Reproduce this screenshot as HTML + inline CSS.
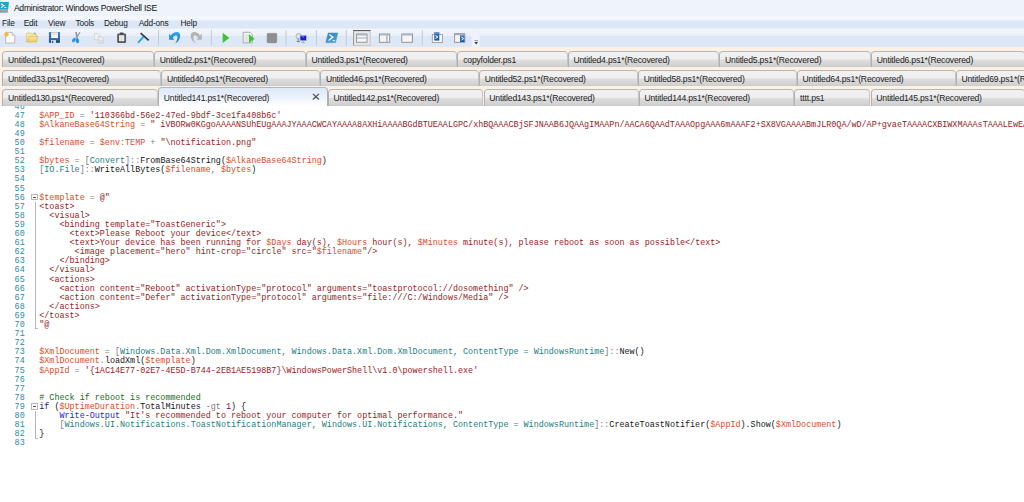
<!DOCTYPE html>
<html><head><meta charset="utf-8"><title>Administrator: Windows PowerShell ISE</title>
<style>
html,body{margin:0;padding:0;}
body{width:1024px;height:502px;overflow:hidden;position:relative;background:#fff;font-family:"Liberation Sans",sans-serif;}
#top{position:absolute;left:0;top:0;width:1024px;height:48px;
 background:linear-gradient(to bottom,#eff3fb 0,#eff3fb 16px,#f6f9fd 17px,#eff4fb 20px,#dde7f6 21px,#dce6f5 28px,#f3f6fc 29px,#eaf0f9 35.5px,#dde7f6 36.5px,#dde7f6 47px,#fdf1e3 47.6px);}
#strip{position:absolute;left:0;top:47.5px;width:1024px;height:58px;background:#fdf1e3;}
#title{position:absolute;left:13.9px;top:0;height:17px;line-height:16.5px;font-size:8.6px;letter-spacing:-0.25px;color:#111;white-space:nowrap;}
.mi{position:absolute;top:17px;height:12px;line-height:12.5px;font-size:8.3px;letter-spacing:-0.15px;color:#1a1a1a;white-space:nowrap;}
.tab{position:absolute;box-sizing:border-box;border:1px solid #b0b0b0;border-top-color:#b6b6b6;border-right-color:#c4c4c4;border-bottom:none;border-radius:4px 4px 0 0;
 background:linear-gradient(to bottom,#f1f1f1 0,#efefef 46%,#dddddd 54%,#d1d1d1 92%,#c8c8c8 100%);font-size:8.6px;letter-spacing:-0.18px;color:#1b1b1b;white-space:nowrap;overflow:hidden;}
.tab span{position:absolute;left:4.8px;top:1px;line-height:15.6px;}
.tab.sel{background:linear-gradient(to bottom,#dde8f8 0,#e8effa 40%,#ffffff 100%);margin-top:-1.7px;border-right-color:#b0b0b0;height:19px !important;z-index:3;}
.tab.sel span{top:2.4px}
#tabline{position:absolute;left:0;top:104.6px;width:1024px;height:1px;background:#8c8c8c;}
#editor{position:absolute;left:0;top:105.6px;width:1024px;height:397px;background:#fff;overflow:hidden;}
.ln{position:absolute;left:0;height:0;white-space:pre;font-family:"Liberation Mono",monospace;font-size:8.425px;line-height:0;letter-spacing:0;}
.ln span{position:relative;}
.fbox{position:absolute;left:31.4px;width:6.3px;height:6.3px;box-sizing:border-box;border:0.9px solid #b9b9b9;background:#fff;}
.fbox i{position:absolute;left:0.8px;top:1.8px;width:3px;height:0.9px;background:#505050;}
.fline{position:absolute;left:35.1px;width:0.9px;background:#b6b6b6;}
.ftick{position:absolute;left:35.1px;width:2.6px;height:0.8px;background:#b6b6b6;}
.num{display:inline-block;width:24.70px;margin-left:14.6px;color:#2b8aa6;}
.v{color:#dc4a1e} .s{color:#962222} .o{color:#7c7c7c} .t{color:#1b8080} .m{color:#151515}
.c{color:#1a6a1a} .k{color:#1a1a8b} .n{color:#800080} .b{color:#2020ff}
</style></head><body>
<div id="top"></div>
<div id="strip"></div>
<div id="title">Administrator: Windows PowerShell ISE</div>
<span class="mi" style="left:2.0px">File</span><span class="mi" style="left:23.7px">Edit</span><span class="mi" style="left:48.0px">View</span><span class="mi" style="left:75.5px">Tools</span><span class="mi" style="left:104.0px">Debug</span><span class="mi" style="left:138.7px">Add-ons</span><span class="mi" style="left:180.4px">Help</span>
<svg id="icons" width="1024" height="48" viewBox="0 0 1024 48" style="position:absolute;left:0;top:0">
<defs>
<linearGradient id="gsave" x1="0" y1="0" x2="0" y2="1"><stop offset="0" stop-color="#3d7cc8"/><stop offset="1" stop-color="#27589c"/></linearGradient>
<linearGradient id="gps" x1="0" y1="0" x2="1" y2="1"><stop offset="0" stop-color="#2a7fb8"/><stop offset="1" stop-color="#55a8d6"/></linearGradient>
<linearGradient id="gfold" x1="0" y1="0" x2="0" y2="1"><stop offset="0" stop-color="#f7e7a4"/><stop offset="1" stop-color="#eccb62"/></linearGradient>
<linearGradient id="gbl" x1="0" y1="0" x2="0" y2="1"><stop offset="0" stop-color="#2f7fd0"/><stop offset="1" stop-color="#1d55a8"/></linearGradient>
<linearGradient id="gundo" gradientUnits="userSpaceOnUse" x1="0" y1="32" x2="0" y2="44"><stop offset="0" stop-color="#2ea6ee"/><stop offset="1" stop-color="#1a74c4"/></linearGradient>
</defs>
<!-- app icon -->
<g>
<path d="M0 2 L9 2 L8.1 9.5 L0 9.5 Z" fill="#18a8ca"/>
<path d="M0 9.4 L8.1 9.4 L7.5 12.7 L0 12.7 Z" fill="#7e9a9c"/>
<path d="M1 3.700 L3.800 5.600 L1 7.600" fill="none" stroke="#fff" stroke-width="1.1"/>
<path d="M4.300 7.500 L6.300 7.500" stroke="#fff" stroke-width="0.9"/>
<path d="M0.5 11 H6.800" stroke="#a9bcbc" stroke-width="0.9"/>
</g>
<!-- new -->
<g>
<path d="M5.6 32.4 L12 32.4 L14.8 35.2 L14.8 43 L5.6 43 Z" fill="#fbfbfb" stroke="#b4b4b8" stroke-width="0.9"/>
<path d="M12 32.4 L12 35.2 L14.8 35.2" fill="#e6e6e6" stroke="#b4b4b8" stroke-width="0.7"/>
<path d="M6.4 31.6 L9 34.4 L6.4 37.2 L3.8 34.4 Z" fill="#f9b82e"/>
</g>
<!-- open -->
<g>
<path d="M26.4 34 L27.2 33 L31 33 L31.8 34 L36.4 34 L36.4 41.6 L26.4 41.6 Z" fill="#f6e9ad" stroke="#d9bc5c" stroke-width="0.6"/>
<path d="M33.5 33.2 L35.4 33.2 L35.4 34.4" fill="none" stroke="#56a89a" stroke-width="0.8"/>
<path d="M28.8 36.4 L38 36.4 L36.2 42 L26.8 42 Z" fill="url(#gfold)" stroke="#d4b24e" stroke-width="0.6"/>
</g>
<!-- save -->
<g>
<rect x="48.9" y="32" width="11.1" height="11.1" rx="0.8" fill="url(#gsave)"/>
<rect x="51.1" y="32.3" width="6.9" height="5.8" fill="#f6f6f6"/>
<rect x="51.1" y="32.3" width="6.9" height="0.9" fill="#c9c9c9"/>
<rect x="52.3" y="34.4" width="4.5" height="0.6" fill="#d0d0d0"/>
<rect x="51.1" y="40.1" width="4.8" height="3" fill="#e2e6ee"/>
<rect x="52.1" y="40.9" width="1.1" height="2.2" fill="#1f3f78"/>
<rect x="56.6" y="40.4" width="2" height="2" fill="#1f4a8c"/>
</g>
<!-- cut -->
<g>
<path d="M75.3 32.1 L76.8 32.1 L77.7 38 L76.3 38.5 Z" fill="#8a9199"/>
<path d="M80.5 32.6 L79.4 32.1 L75.4 37.8 L76.8 38.8 Z" fill="#99a0a8"/>
<ellipse cx="73.9" cy="40.1" rx="1.6" ry="2.5" transform="rotate(38 73.9 40.1)" fill="#2b9cf2"/>
<ellipse cx="77.4" cy="40.7" rx="1.6" ry="2.5" transform="rotate(-8 77.4 40.7)" fill="#2390e8"/>
</g>
<!-- copy (disabled) -->
<g>
<path d="M94.4 33.4 L98 33.4 L99.8 35.2 L99.8 39.8 L94.4 39.8 Z" fill="#f0f0f0" stroke="#cfcfcf" stroke-width="0.8"/>
<path d="M98.2 36.6 L101.6 36.6 L103.3 38.3 L103.3 43 L98.2 43 Z" fill="#ececec" stroke="#cbcbcb" stroke-width="0.8"/>
<rect x="99.6" y="40" width="2.4" height="1.6" fill="#d4d4d4"/>
</g>
<!-- paste -->
<g>
<rect x="117.2" y="33.5" width="8.9" height="9.4" rx="1.2" fill="#595959"/>
<rect x="119.8" y="32.5" width="3.7" height="2.2" rx="0.6" fill="#4a4a4a"/>
<rect x="119" y="35.2" width="5.3" height="6" fill="#e9e9e9"/>
<rect x="119" y="37" width="5.3" height="0.5" fill="#d2d2d2"/>
<rect x="119" y="39" width="5.3" height="0.5" fill="#d2d2d2"/>
</g>
<!-- clear -->
<g>
<path d="M143.9 36.4 L138.6 42.1" stroke="#2aa2ec" stroke-width="2" stroke-linecap="round" fill="none"/>
<path d="M140.2 33.9 L147.9 40.9" stroke="#4ab0f0" stroke-width="1" fill="none"/>
<path d="M140.6 32.9 L148.8 40.2" stroke="#2a2a2a" stroke-width="1.3" fill="none"/>
</g>
<!-- separators -->
<g stroke="#c3cad6" stroke-width="1">
<path d="M158.5 30 V45.4"/><path d="M211.4 30 V45.4"/><path d="M286 30 V45.4"/><path d="M316.4 30 V45.4"/><path d="M346.3 30 V45.4"/><path d="M422.3 30 V45.4"/>
</g>
<!-- undo -->
<g fill="url(#gundo)">
<path d="M169.1 33.4 L169.1 39.7 L174.3 39.7 Z"/>
<path d="M170.8 35.7 C172.5 33 175.5 31.6 178 32.3 C180.5 33.2 180.7 36.5 179.4 39 C178.4 41 176.8 42.6 175.2 43.6 C176.5 41.5 177.6 39 177.5 37 C177.4 35.4 176.2 35 174.8 35.8 C174 36.3 173.2 37.2 172.6 38.3 Z"/>
</g>
<!-- redo -->
<g fill="#b4b4b4" transform="translate(370.9 0) scale(-1 1)">
<path d="M169.1 33.4 L169.1 39.7 L174.3 39.7 Z"/>
<path d="M170.8 35.7 C172.5 33 175.5 31.6 178 32.3 C180.5 33.2 180.7 36.5 179.4 39 C178.4 41 176.8 42.6 175.2 43.6 C176.5 41.5 177.6 39 177.5 37 C177.4 35.4 176.2 35 174.8 35.8 C174 36.3 173.2 37.2 172.6 38.3 Z"/>
</g>
<!-- play -->
<path d="M222.7 32.8 L229.3 37.9 L222.7 43 Z" fill="#3fc231"/>
<!-- run selection -->
<g>
<path d="M243.2 32.3 L250 32.3 L252.4 34.6 L252.4 42.8 L243.2 42.8 Z" fill="#f4f4f4" stroke="#9b9b9b" stroke-width="0.8"/>
<path d="M244.6 35.5 H249 M244.6 37.3 H248 M244.6 39.1 H248 M244.6 40.9 H248" stroke="#c4c4cc" stroke-width="0.6"/>
<path d="M248.9 34.3 L254.6 38.7 L248.9 43.1 Z" fill="#3fc231"/>
</g>
<!-- stop -->
<rect x="267.2" y="33.4" width="9.5" height="9.3" rx="0.8" fill="#8f8f8f" stroke="#7c7c7c" stroke-width="0.6"/>
<!-- remote -->
<g>
<circle cx="298.7" cy="36.2" r="2.7" fill="#dfe7ec" stroke="#98a2a8" stroke-width="0.8"/>
<path d="M298.2 38.8 L298.2 41.4 M296.6 41.6 H300" stroke="#6f777c" stroke-width="0.9"/>
<rect x="300" y="35.3" width="6.6" height="5.5" fill="#1420d6" stroke="#c9cdd6" stroke-width="0.7"/>
<path d="M301 36.2 L304.5 36.2 L303.4 38" fill="#5a7cf0"/>
<path d="M303.3 41 V42.4 M301.6 42.7 H305" stroke="#9aa0a8" stroke-width="0.8"/>
</g>
<!-- PS icon -->
<g>
<path d="M328.2 33 L337.8 33 L335.5 42.6 L325.8 42.6 Z" fill="url(#gps)" stroke="#3a8cbc" stroke-width="0.5"/>
<path d="M329.3 34.6 L332.8 37.3 L328.6 40.4" fill="none" stroke="#fff" stroke-width="1.3"/>
<path d="M332.6 40.6 H335.2" stroke="#dff0fa" stroke-width="1"/>
</g>
<!-- pressed button -->
<rect x="353.6" y="30.7" width="16.6" height="14.6" fill="#e9e9e9"/>
<path d="M353.2 30.6 H370.6" stroke="#4e4e4e" stroke-width="1"/>
<path d="M353.6 30.6 V45.6" stroke="#8a8a8a" stroke-width="0.9"/>
<path d="M370.2 31 V45.6 M353.4 45.3 H370.6" stroke="#c2c2c2" stroke-width="0.9"/>
<!-- layout 1 -->
<g>
<rect x="356.6" y="34" width="10.4" height="8.3" fill="#f5f5f5" stroke="#8b8b93" stroke-width="0.9"/>
<rect x="357" y="34.2" width="9.6" height="1.3" fill="#a9b1c9"/>
<rect x="357" y="37.3" width="9.6" height="1.3" fill="#b4bcd2"/>
</g>
<!-- layout 2 -->
<g>
<rect x="379.4" y="34" width="10.3" height="8.3" fill="#f5f5f5" stroke="#8b8b93" stroke-width="0.9"/>
<rect x="379.8" y="34.2" width="9.5" height="1.3" fill="#a9b1c9"/>
<rect x="386.300" y="35.4" width="1.2" height="6.6" fill="#9ea4b8"/>
</g>
<!-- layout 3 -->
<g>
<rect x="401.8" y="34" width="10.6" height="8.3" fill="#f5f5f5" stroke="#8b8b93" stroke-width="0.9"/>
<rect x="402.2" y="34.2" width="9.8" height="1.3" fill="#a9b1c9"/>
</g>
<!-- icon A -->
<g>
<rect x="432.3" y="34.6" width="10.1" height="8" fill="#fafafa" stroke="#9a9aa0" stroke-width="0.9"/>
<rect x="434.300" y="32.2" width="5" height="8.400" fill="url(#gbl)"/>
<rect x="434.300" y="32.2" width="5" height="1.2" fill="#8d93a4"/>
<path d="M435.4 35.6 L437.9 37 L435.4 38.5" fill="none" stroke="#fff" stroke-width="1"/>
</g>
<!-- icon B -->
<g>
<rect x="454.6" y="33.7" width="10.2" height="8.600" fill="#f6f6f6" stroke="#8b8b93" stroke-width="0.9"/>
<rect x="455" y="33.9" width="9.4" height="1.4" fill="#a9afc0"/>
<rect x="460" y="35.3" width="4.5" height="6.700" fill="url(#gbl)"/>
<path d="M461.4 37 L463.7 38.5 L461.4 40.1" fill="none" stroke="#fff" stroke-width="1"/>
</g>
<!-- overflow -->
<rect x="471.7" y="29" width="8" height="18.3" fill="#edf2fb"/>
<path d="M474.5 40.6 H478" stroke="#8a8a8a" stroke-width="0.9"/>
<path d="M474.3 42.1 L478.1 42.1 L476.2 44.4 Z" fill="#3c3c3c"/>
</svg>

<div class="tab" style="left:2.3px;top:51.0px;width:151.7px;height:16.0px"><span>Untitled1.ps1*(Recovered)</span></div>
<div class="tab" style="left:154.0px;top:51.0px;width:151.7px;height:16.0px"><span>Untitled2.ps1*(Recovered)</span></div>
<div class="tab" style="left:305.7px;top:51.0px;width:151.7px;height:16.0px"><span>Untitled3.ps1*(Recovered)</span></div>
<div class="tab" style="left:457.4px;top:51.0px;width:110.2px;height:16.0px"><span>copyfolder.ps1</span></div>
<div class="tab" style="left:567.6px;top:51.0px;width:151.7px;height:16.0px"><span>Untitled4.ps1*(Recovered)</span></div>
<div class="tab" style="left:719.3px;top:51.0px;width:151.7px;height:16.0px"><span>Untitled5.ps1*(Recovered)</span></div>
<div class="tab" style="left:871.0px;top:51.0px;width:153.9px;height:16.0px"><span>Untitled6.ps1*(Recovered)</span></div>
<div class="tab" style="left:2.3px;top:69.9px;width:158.9px;height:16.0px"><span>Untitled33.ps1*(Recovered)</span></div>
<div class="tab" style="left:161.2px;top:69.9px;width:158.9px;height:16.0px"><span>Untitled40.ps1*(Recovered)</span></div>
<div class="tab" style="left:320.1px;top:69.9px;width:158.9px;height:16.0px"><span>Untitled46.ps1*(Recovered)</span></div>
<div class="tab" style="left:479.0px;top:69.9px;width:158.9px;height:16.0px"><span>Untitled52.ps1*(Recovered)</span></div>
<div class="tab" style="left:637.9px;top:69.9px;width:158.9px;height:16.0px"><span>Untitled58.ps1*(Recovered)</span></div>
<div class="tab" style="left:796.8px;top:69.9px;width:158.9px;height:16.0px"><span>Untitled64.ps1*(Recovered)</span></div>
<div class="tab" style="left:955.7px;top:69.9px;width:158.9px;height:16.0px"><span>Untitled69.ps1*(Recovered)</span></div>
<div class="tab" style="left:2.3px;top:89.0px;width:155.7px;height:16.7px"><span>Untitled130.ps1*(Recovered)</span></div>
<div class="tab sel" style="left:158.0px;top:89.0px;width:169.8px;height:16.7px"><span>Untitled141.ps1*(Recovered)</span></div>
<div class="tab" style="left:327.8px;top:89.0px;width:155.7px;height:16.7px"><span>Untitled142.ps1*(Recovered)</span></div>
<div class="tab" style="left:483.5px;top:89.0px;width:155.2px;height:16.7px"><span>Untitled143.ps1*(Recovered)</span></div>
<div class="tab" style="left:638.7px;top:89.0px;width:155.6px;height:16.7px"><span>Untitled144.ps1*(Recovered)</span></div>
<div class="tab" style="left:794.3px;top:89.0px;width:76.2px;height:16.7px"><span>tttt.ps1</span></div>
<div class="tab" style="left:870.5px;top:89.0px;width:154.6px;height:16.7px"><span>Untitled145.ps1*(Recovered)</span></div>
<svg style="position:absolute;left:311.7px;top:93.2px;z-index:5" width="8" height="8" viewBox="0 0 8 8"><path d="M0.9 0.9 L6.9 6.5 M6.9 0.9 L0.9 6.5" stroke="#4c4c4c" stroke-width="1.15" fill="none"/></svg>
<div id="editor"><div style="position:absolute;left:0;top:-105.6px;width:1024px;height:502px">
<div class="ln" style="top:106.60px"><span class="num">46</span></div>
<div class="ln" style="top:115.70px"><span class="num">47</span><span class="v">$APP_ID</span><span class="o"> = </span><span class="s">'110366bd-56e2-47ed-9bdf-3ce1fa408b6c'</span></div>
<div class="ln" style="top:124.80px"><span class="num">48</span><span class="v">$AlkaneBase64String</span><span class="o"> = </span><span class="s">" iVBORw0KGgoAAAANSUhEUgAAAJYAAACWCAYAAAA8AXHiAAAABGdBTUEAALGPC/xhBQAAACBjSFJNAAB6JQAAgIMAAPn/AACA6QAAdTAAAOpgAAA6mAAAF2+SX8VGAAAABmJLR0QA/wD/AP+gvaeTAAAACXBIWXMAAAsTAAALEwEAmpwYAAAAB3RJTUUH</span></div>
<div class="ln" style="top:133.90px"><span class="num">49</span></div>
<div class="ln" style="top:143.00px"><span class="num">50</span><span class="v">$filename</span><span class="o"> = </span><span class="v">$env:TEMP</span><span class="o"> + </span><span class="s">"\notification.png"</span></div>
<div class="ln" style="top:152.10px"><span class="num">51</span></div>
<div class="ln" style="top:161.20px"><span class="num">52</span><span class="v">$bytes</span><span class="o"> = [</span><span class="t">Convert</span><span class="o">]::</span><span class="m">FromBase64String(</span><span class="v">$AlkaneBase64String</span><span class="m">)</span></div>
<div class="ln" style="top:170.30px"><span class="num">53</span><span class="o">[</span><span class="t">IO.File</span><span class="o">]::</span><span class="m">WriteAllBytes(</span><span class="v">$filename</span><span class="o">, </span><span class="v">$bytes</span><span class="m">)</span></div>
<div class="ln" style="top:179.40px"><span class="num">54</span></div>
<div class="ln" style="top:188.50px"><span class="num">55</span></div>
<div class="ln" style="top:197.60px"><span class="num">56</span><span class="v">$template</span><span class="o"> = </span><span class="s">@"</span></div>
<div class="ln" style="top:206.70px"><span class="num">57</span><span class="s">&lt;toast&gt;</span></div>
<div class="ln" style="top:215.80px"><span class="num">58</span><span class="s">  &lt;visual&gt;</span></div>
<div class="ln" style="top:224.90px"><span class="num">59</span><span class="s">    &lt;binding template="ToastGeneric"&gt;</span></div>
<div class="ln" style="top:234.00px"><span class="num">60</span><span class="s">      &lt;text&gt;Please Reboot your device&lt;/text&gt;</span></div>
<div class="ln" style="top:243.10px"><span class="num">61</span><span class="s">      &lt;text&gt;Your device has been running for </span><span class="v">$Days</span><span class="s"> day(s), </span><span class="v">$Hours</span><span class="s"> hour(s), </span><span class="v">$Minutes</span><span class="s"> minute(s), please reboot as soon as possible&lt;/text&gt;</span></div>
<div class="ln" style="top:252.20px"><span class="num">62</span><span class="s">       &lt;image placement="hero" hint-crop="circle" src="</span><span class="v">$filename</span><span class="s">"/&gt;</span></div>
<div class="ln" style="top:261.30px"><span class="num">63</span><span class="s">    &lt;/binding&gt;</span></div>
<div class="ln" style="top:270.40px"><span class="num">64</span><span class="s">  &lt;/visual&gt;</span></div>
<div class="ln" style="top:279.50px"><span class="num">65</span><span class="s">  &lt;actions&gt;</span></div>
<div class="ln" style="top:288.60px"><span class="num">66</span><span class="s">    &lt;action content="Reboot" activationType="protocol" arguments="toastprotocol://dosomething" /&gt;</span></div>
<div class="ln" style="top:297.70px"><span class="num">67</span><span class="s">    &lt;action content="Defer" activationType="protocol" arguments="file:///C:/Windows/Media" /&gt;</span></div>
<div class="ln" style="top:306.80px"><span class="num">68</span><span class="s">  &lt;/actions&gt;</span></div>
<div class="ln" style="top:315.90px"><span class="num">69</span><span class="s">&lt;/toast&gt;</span></div>
<div class="ln" style="top:325.00px"><span class="num">70</span><span class="s">"@</span></div>
<div class="ln" style="top:334.10px"><span class="num">71</span></div>
<div class="ln" style="top:343.20px"><span class="num">72</span></div>
<div class="ln" style="top:352.30px"><span class="num">73</span><span class="v">$XmlDocument</span><span class="o"> = [</span><span class="t">Windows.Data.Xml.Dom.XmlDocument, Windows.Data.Xml.Dom.XmlDocument, ContentType = WindowsRuntime</span><span class="o">]::</span><span class="m">New()</span></div>
<div class="ln" style="top:361.40px"><span class="num">74</span><span class="v">$XmlDocument</span><span class="o">.</span><span class="m">loadXml(</span><span class="v">$template</span><span class="m">)</span></div>
<div class="ln" style="top:370.50px"><span class="num">75</span><span class="v">$AppId</span><span class="o"> = </span><span class="s">'{1AC14E77-02E7-4E5D-B744-2EB1AE5198B7}\WindowsPowerShell\v1.0\powershell.exe'</span></div>
<div class="ln" style="top:379.60px"><span class="num">76</span></div>
<div class="ln" style="top:388.70px"><span class="num">77</span></div>
<div class="ln" style="top:397.80px"><span class="num">78</span><span class="c"># Check if reboot is recommended</span></div>
<div class="ln" style="top:406.90px"><span class="num">79</span><span class="k">if</span><span class="m"> (</span><span class="v">$UptimeDuration</span><span class="o">.</span><span class="m">TotalMinutes</span><span class="o"> -gt </span><span class="n">1</span><span class="m">) {</span></div>
<div class="ln" style="top:416.00px"><span class="num">80</span><span class="b">    Write-Output</span><span class="s"> "It's recommended to reboot your computer for optimal performance."</span></div>
<div class="ln" style="top:425.10px"><span class="num">81</span><span class="o">    [</span><span class="t">Windows.UI.Notifications.ToastNotificationManager, Windows.UI.Notifications, ContentType = WindowsRuntime</span><span class="o">]::</span><span class="m">CreateToastNotifier(</span><span class="v">$AppId</span><span class="m">)</span><span class="m">.Show(</span><span class="v">$XmlDocument</span><span class="m">)</span></div>
<div class="ln" style="top:434.20px"><span class="num">82</span><span class="m">}</span></div>
<div class="ln" style="top:443.30px"><span class="num">83</span></div>
<div class="fbox" style="top:194.10px"><i></i></div><div class="fline" style="top:201.50px;height:127.70px"></div><div class="ftick" style="top:328.40px"></div><div class="fbox" style="top:403.40px"><i></i></div><div class="fline" style="top:410.80px;height:27.60px"></div><div class="ftick" style="top:437.60px"></div>
</div></div>
</body></html>
